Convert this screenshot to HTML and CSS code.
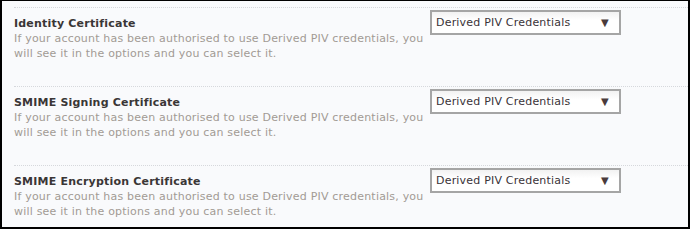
FILE: index.html
```html
<!DOCTYPE html>
<html lang="en">
<head>
    <meta charset="UTF-8">
    <title>Certificates</title>
    <link rel="stylesheet" href="styles.css">
</head>
<body>

    <div class="panel">
        <div class="cert-row">
            <div class="cert-info">
                <div class="cert-title">Identity Certificate</div>
                <div class="cert-desc">If your account has been authorised to use Derived PIV credentials, you will see it in the options and you can select it.</div>
            </div>
            <div class="picker">
                <span class="picker-text">Derived PIV Credentials</span>
                <span class="picker-arrow">&#9660;</span>
            </div>
        </div>

        <div class="cert-row">
            <div class="cert-info">
                <div class="cert-title">SMIME Signing Certificate</div>
                <div class="cert-desc">If your account has been authorised to use Derived PIV credentials, you will see it in the options and you can select it.</div>
            </div>
            <div class="picker">
                <span class="picker-text">Derived PIV Credentials</span>
                <span class="picker-arrow">&#9660;</span>
            </div>
        </div>

        <div class="cert-row">
            <div class="cert-info">
                <div class="cert-title">SMIME Encryption Certificate</div>
                <div class="cert-desc">If your account has been authorised to use Derived PIV credentials, you will see it in the options and you can select it.</div>
            </div>
            <div class="picker">
                <span class="picker-text">Derived PIV Credentials</span>
                <span class="picker-arrow">&#9660;</span>
            </div>
        </div>
    </div>

</body>
</html>
```

FILE: styles.css
```css
body {
    margin: 0;
    font-family: "DejaVu Sans", Verdana, sans-serif;
    font-size: 11px;
    letter-spacing: 0.2px;
    background-color: #f9fafc;
}
.panel {
    height: 229px;
    box-sizing: border-box;
    border: 2px solid #000;
    border-top-width: 1px;
    padding-top: 6px;
    overflow: hidden;
    background-color: #f9fafc;
}
.cert-row {
    display: flex;
    align-items: flex-start;
    margin-left: 12px;
    padding: 2px 0 25px;
    border-top: 1px dotted #d6d8dc;
}
.cert-info {
    width: 416px;
    margin-top: 6px;
    line-height: 15px;
}
.cert-title {
    font-weight: bold;
    color: #3a3636;
}
.cert-desc {
    color: #a29b94;
}
.picker {
    display: flex;
    align-items: center;
    justify-content: space-between;
    width: 191px;
    height: 25px;
    box-sizing: border-box;
    border: 2px solid #a5a5a5;
    padding: 0 10px 0 4px;
    background: linear-gradient(#f2f2f2, #fff 40%);
    color: #3a3338;
}
.picker-arrow {
    font-size: 10px;
    color: #4a3b3b;
}
```
